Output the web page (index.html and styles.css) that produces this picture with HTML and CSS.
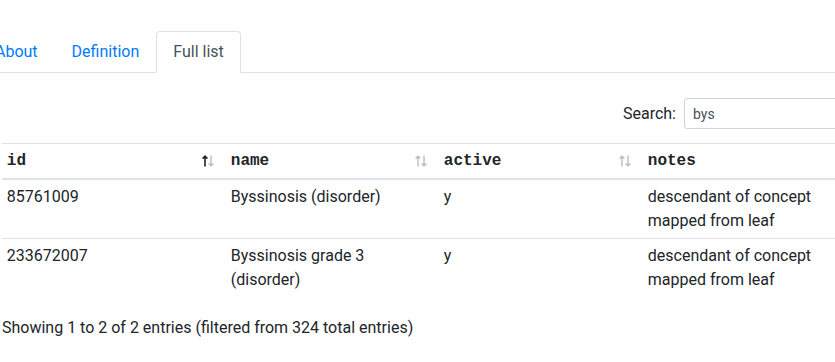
FILE: index.html
```html
<!DOCTYPE html>
<html lang="en">
<head>
<meta charset="utf-8">
<title>Full list</title>
<link rel="stylesheet" href="styles.css">
</head>
<body>
<div class="page">
  <ul class="tabs">
    <li><a class="tab" href="#">About</a></li>
    <li><a class="tab" href="#">Definition</a></li>
    <li><a class="tab active" href="#">Full list</a></li>
  </ul>
  <div class="filter">
    <label class="filter-label">Search:<input class="filter-input" type="search" value="bys"></label>
  </div>
  <table class="grid">
    <colgroup>
      <col class="c-id"><col class="c-name"><col class="c-active"><col class="c-notes">
    </colgroup>
    <thead>
      <tr>
        <th>id<span class="sorter asc"><svg class="arr up" viewBox="0 0 6 12" width="6" height="12"><path d="M3 11.5V1.2M0.6 3.6L3 1.2L5.4 3.6"/></svg><svg class="arr down" viewBox="0 0 6 12" width="6" height="12"><path d="M3 0.5V10.8M0.6 8.4L3 10.8L5.4 8.4"/></svg></span></th>
        <th>name<span class="sorter"><svg class="arr up" viewBox="0 0 6 12" width="6" height="12"><path d="M3 11.5V1.2M0.6 3.6L3 1.2L5.4 3.6"/></svg><svg class="arr down" viewBox="0 0 6 12" width="6" height="12"><path d="M3 0.5V10.8M0.6 8.4L3 10.8L5.4 8.4"/></svg></span></th>
        <th>active<span class="sorter"><svg class="arr up" viewBox="0 0 6 12" width="6" height="12"><path d="M3 11.5V1.2M0.6 3.6L3 1.2L5.4 3.6"/></svg><svg class="arr down" viewBox="0 0 6 12" width="6" height="12"><path d="M3 0.5V10.8M0.6 8.4L3 10.8L5.4 8.4"/></svg></span></th>
        <th>notes<span class="sorter"><svg class="arr up" viewBox="0 0 6 12" width="6" height="12"><path d="M3 11.5V1.2M0.6 3.6L3 1.2L5.4 3.6"/></svg><svg class="arr down" viewBox="0 0 6 12" width="6" height="12"><path d="M3 0.5V10.8M0.6 8.4L3 10.8L5.4 8.4"/></svg></span></th>
      </tr>
    </thead>
    <tbody>
      <tr>
        <td>85761009</td>
        <td>Byssinosis (disorder)</td>
        <td>y</td>
        <td>descendant of concept mapped from leaf</td>
      </tr>
      <tr>
        <td>233672007</td>
        <td>Byssinosis grade 3 (disorder)</td>
        <td>y</td>
        <td>descendant of concept mapped from leaf</td>
      </tr>
    </tbody>
  </table>
  <div class="info">Showing 1 to 2 of 2 entries (filtered from 324 total entries)</div>
</div>
</body>
</html>
```
FILE: styles.css
```css
html, body {
  margin: 0;
  padding: 0;
  background: #fff;
  overflow: hidden;
}
body {
  font-family: Roboto, "Liberation Sans", sans-serif;
  font-size: 16px;
  line-height: 1.5;
  color: #212529;
}
.page {
  padding-left: 2px;
  width: 866px;
}
.tabs {
  list-style: none;
  display: flex;
  margin: 31px 0 0 -24px;
  padding: 0;
  border-bottom: 1px solid #dee2e6;
  width: 900px;
}
.tabs li {
  margin-bottom: -1px;
}
.tab {
  display: block;
  padding: 8px 16px;
  border: 1px solid transparent;
  border-top-left-radius: 4px;
  border-top-right-radius: 4px;
  color: #007bff;
  text-decoration: none;
}
.tab.active {
  color: #495057;
  background: #fff;
  border-color: #dee2e6 #dee2e6 #fff;
}
.filter {
  display: flex;
  justify-content: flex-end;
  margin-top: 25px;
}
.filter-label {
  display: flex;
  align-items: center;
  white-space: nowrap;
}
.filter-input {
  margin-left: 8px;
  width: 184px;
  height: 31px;
  box-sizing: border-box;
  padding: 4px 8px;
  font-family: Roboto, "Liberation Sans", sans-serif;
  font-size: 14px;
  line-height: 1.5;
  color: #495057;
  border: 1px solid #ced4da;
  border-radius: 3px;
  background: #fff;
  outline: none;
}
.grid {
  margin-top: 14px;
  width: 866px;
  table-layout: fixed;
  border-collapse: collapse;
}
.c-id { width: 224px; }
.c-name { width: 213px; }
.c-active { width: 204px; }
.c-notes { width: 225px; }
.grid th,
.grid td {
  padding: 4.8px;
  text-align: left;
  vertical-align: top;
  border-top: 1px solid #dee2e6;
}
.grid td {
  padding-top: 5.5px;
}
.grid th {
  font-family: "Liberation Mono", "DejaVu Sans Mono", monospace;
  font-weight: bold;
  border-bottom: 2px solid #dee2e6;
  position: relative;
  padding-right: 30px;
}
.sorter {
  position: absolute;
  top: 11px;
  right: 12px;
  display: flex;
}
.arr {
  display: block;
  fill: none;
  stroke: #212529;
  stroke-width: 1.4;
  opacity: 0.3;
}
.sorter.asc .up {
  opacity: 1;
  stroke-width: 1.6;
}
.info {
  padding-top: 19px;
}
```
